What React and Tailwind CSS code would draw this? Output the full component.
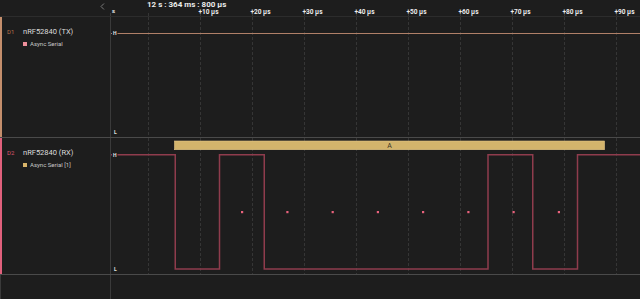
import React from "react";

const GRID = [148.5, 200.5, 252.5, 304.5, 356.5, 408.5, 460.5, 512.5, 564.5, 616.5];
const DOTS = [241, 286.3, 331.6, 376.8, 422, 467.3, 512.5, 557.8];

function Grid({ y1, y2 }) {
  return GRID.map((x) => (
    <line key={x} x1={x} x2={x} y1={y1} y2={y2} stroke="#353535" strokeWidth="1" strokeDasharray="3 2" />
  ));
}

function LevelLabel({ x, y, t }) {
  return (
    <g>
      <rect x={x - 1} y={y - 4.5} width="5.5" height="5.5" fill="#1d1d1d" />
      <text x={x} y={y} fontSize="5" fontWeight="700" fill="#e4e4e4" fontFamily="Roboto, sans-serif">{t}</text>
    </g>
  );
}

function ChannelLabel({ id, idColor, name, sq, sub }) {
  return (
    <div className="pt-[10px] pl-[5px]">
      <div className="flex items-center h-[9px]">
        <span className={`w-[16px] text-[6px] leading-none ${idColor}`}>{id}</span>
        <span className="text-[7.5px] leading-none text-[#dcdcdc]">{name}</span>
      </div>
      <div className="flex items-center gap-[3px] mt-[5px] pl-[16px] h-[6px]">
        <span className={`w-[4px] h-[4px] ${sq}`}></span>
        <span className="text-[6px] leading-none text-[#c8c8c8]">{sub}</span>
      </div>
    </div>
  );
}

export default function App() {
  const labels = ["+10 µs", "+20 µs", "+30 µs", "+40 µs", "+50 µs", "+60 µs", "+70 µs", "+80 µs", "+90 µs"];
  return (
    <div className="w-[640px] h-[299px] bg-[#1d1d1d] overflow-hidden flex flex-col font-['Roboto',sans-serif] select-none">
      {/* header */}
      <div className="h-[17px] shrink-0 border-b border-[#2c2c2c] flex">
        <div className="w-[110px] shrink-0 flex justify-end pr-[5px] pt-[3px]">
          <svg width="5" height="7" viewBox="0 0 5 7">
            <path d="M4 0.5 L1 3.5 L4 6.5" stroke="#7a7a7a" strokeWidth="1" fill="none" />
          </svg>
        </div>
        <div className="flex-1 relative">
          <svg className="absolute inset-0" width="530" height="16" viewBox="110 0 530 16">
            <line x1="110.5" x2="110.5" y1="13" y2="16" stroke="#3a3a3a" />
            <Grid y1={13} y2={16} />
          </svg>
          <span className="absolute left-[37px] top-[0.5px] text-[8px] leading-none font-bold text-[#ececec] whitespace-nowrap">12 s : 364 ms : 800 µs</span>
          <span className="absolute left-[2px] top-[8px] text-[6px] leading-none font-bold text-[#ececec]">s</span>
          {labels.map((l, i) => (
            <span key={l} className="absolute top-[8.5px] text-[6.5px] leading-none font-bold text-[#ececec] whitespace-nowrap" style={{ left: 88.5 + i * 52 }}>
              {l}
            </span>
          ))}
        </div>
      </div>

      {/* D1 */}
      <div className="h-[121px] shrink-0 border-b border-[#4a4a4a] flex">
        <div className="w-[110px] shrink-0 border-l-2 border-[#c48e6c]">
          <ChannelLabel id="D1" idColor="text-[#b8714a]" name="nRF52840 (TX)" sq="bg-[#ee8f9b]" sub="Async Serial" />
        </div>
        <div className="flex-1 border-l border-[#3a3a3a]">
          <svg width="529" height="120" viewBox="111 17 529 120" className="block">
            <Grid y1={17} y2={137} />
            <line x1="111" x2="640" y1="33.5" y2="33.5" stroke="#b08068" strokeWidth="1" />
            <LevelLabel x={113} y={35} t="H" />
            <LevelLabel x={114} y={134} t="L" />
          </svg>
        </div>
      </div>

      {/* D2 */}
      <div className="h-[137px] shrink-0 border-b border-[#4a4a4a] flex">
        <div className="w-[110px] shrink-0 border-l-2 border-[#e0607c]">
          <ChannelLabel id="D2" idColor="text-[#d9546c]" name="nRF52840 (RX)" sq="bg-[#d8b46a]" sub="Async Serial [1]" />
        </div>
        <div className="flex-1 border-l border-[#3a3a3a]">
          <svg width="529" height="136" viewBox="111 138 529 136" className="block">
            <Grid y1={138} y2={274} />
            <path
              d="M111 154.75 H175.25 V269 H219.5 V154.75 H264.25 V269 H488 V154.75 H532.75 V269 H577.5 V154.75 H640"
              stroke="#8f3c4d"
              strokeWidth="1.5"
              fill="none"
            />
            <rect x="174.5" y="141" width="430" height="8.7" fill="#d3b46c" stroke="#e3c687" strokeWidth="0.6" />
            <text x="389.5" y="147.6" textAnchor="middle" fontSize="7" fill="#3a3426" fontFamily="Roboto, sans-serif">A</text>
            {DOTS.map((x) => (
              <rect key={x} x={x} y="211" width="2.2" height="2.2" fill="#e8627c" />
            ))}
            <LevelLabel x={113} y={156.5} t="H" />
            <LevelLabel x={114} y={271} t="L" />
          </svg>
        </div>
      </div>

      {/* bottom */}
      <div className="flex-1 flex">
        <div className="w-[110px] shrink-0 border-l border-[#3a3a3a]"></div>
        <div className="flex-1 border-l border-[#3a3a3a]"></div>
      </div>
    </div>
  );
}
